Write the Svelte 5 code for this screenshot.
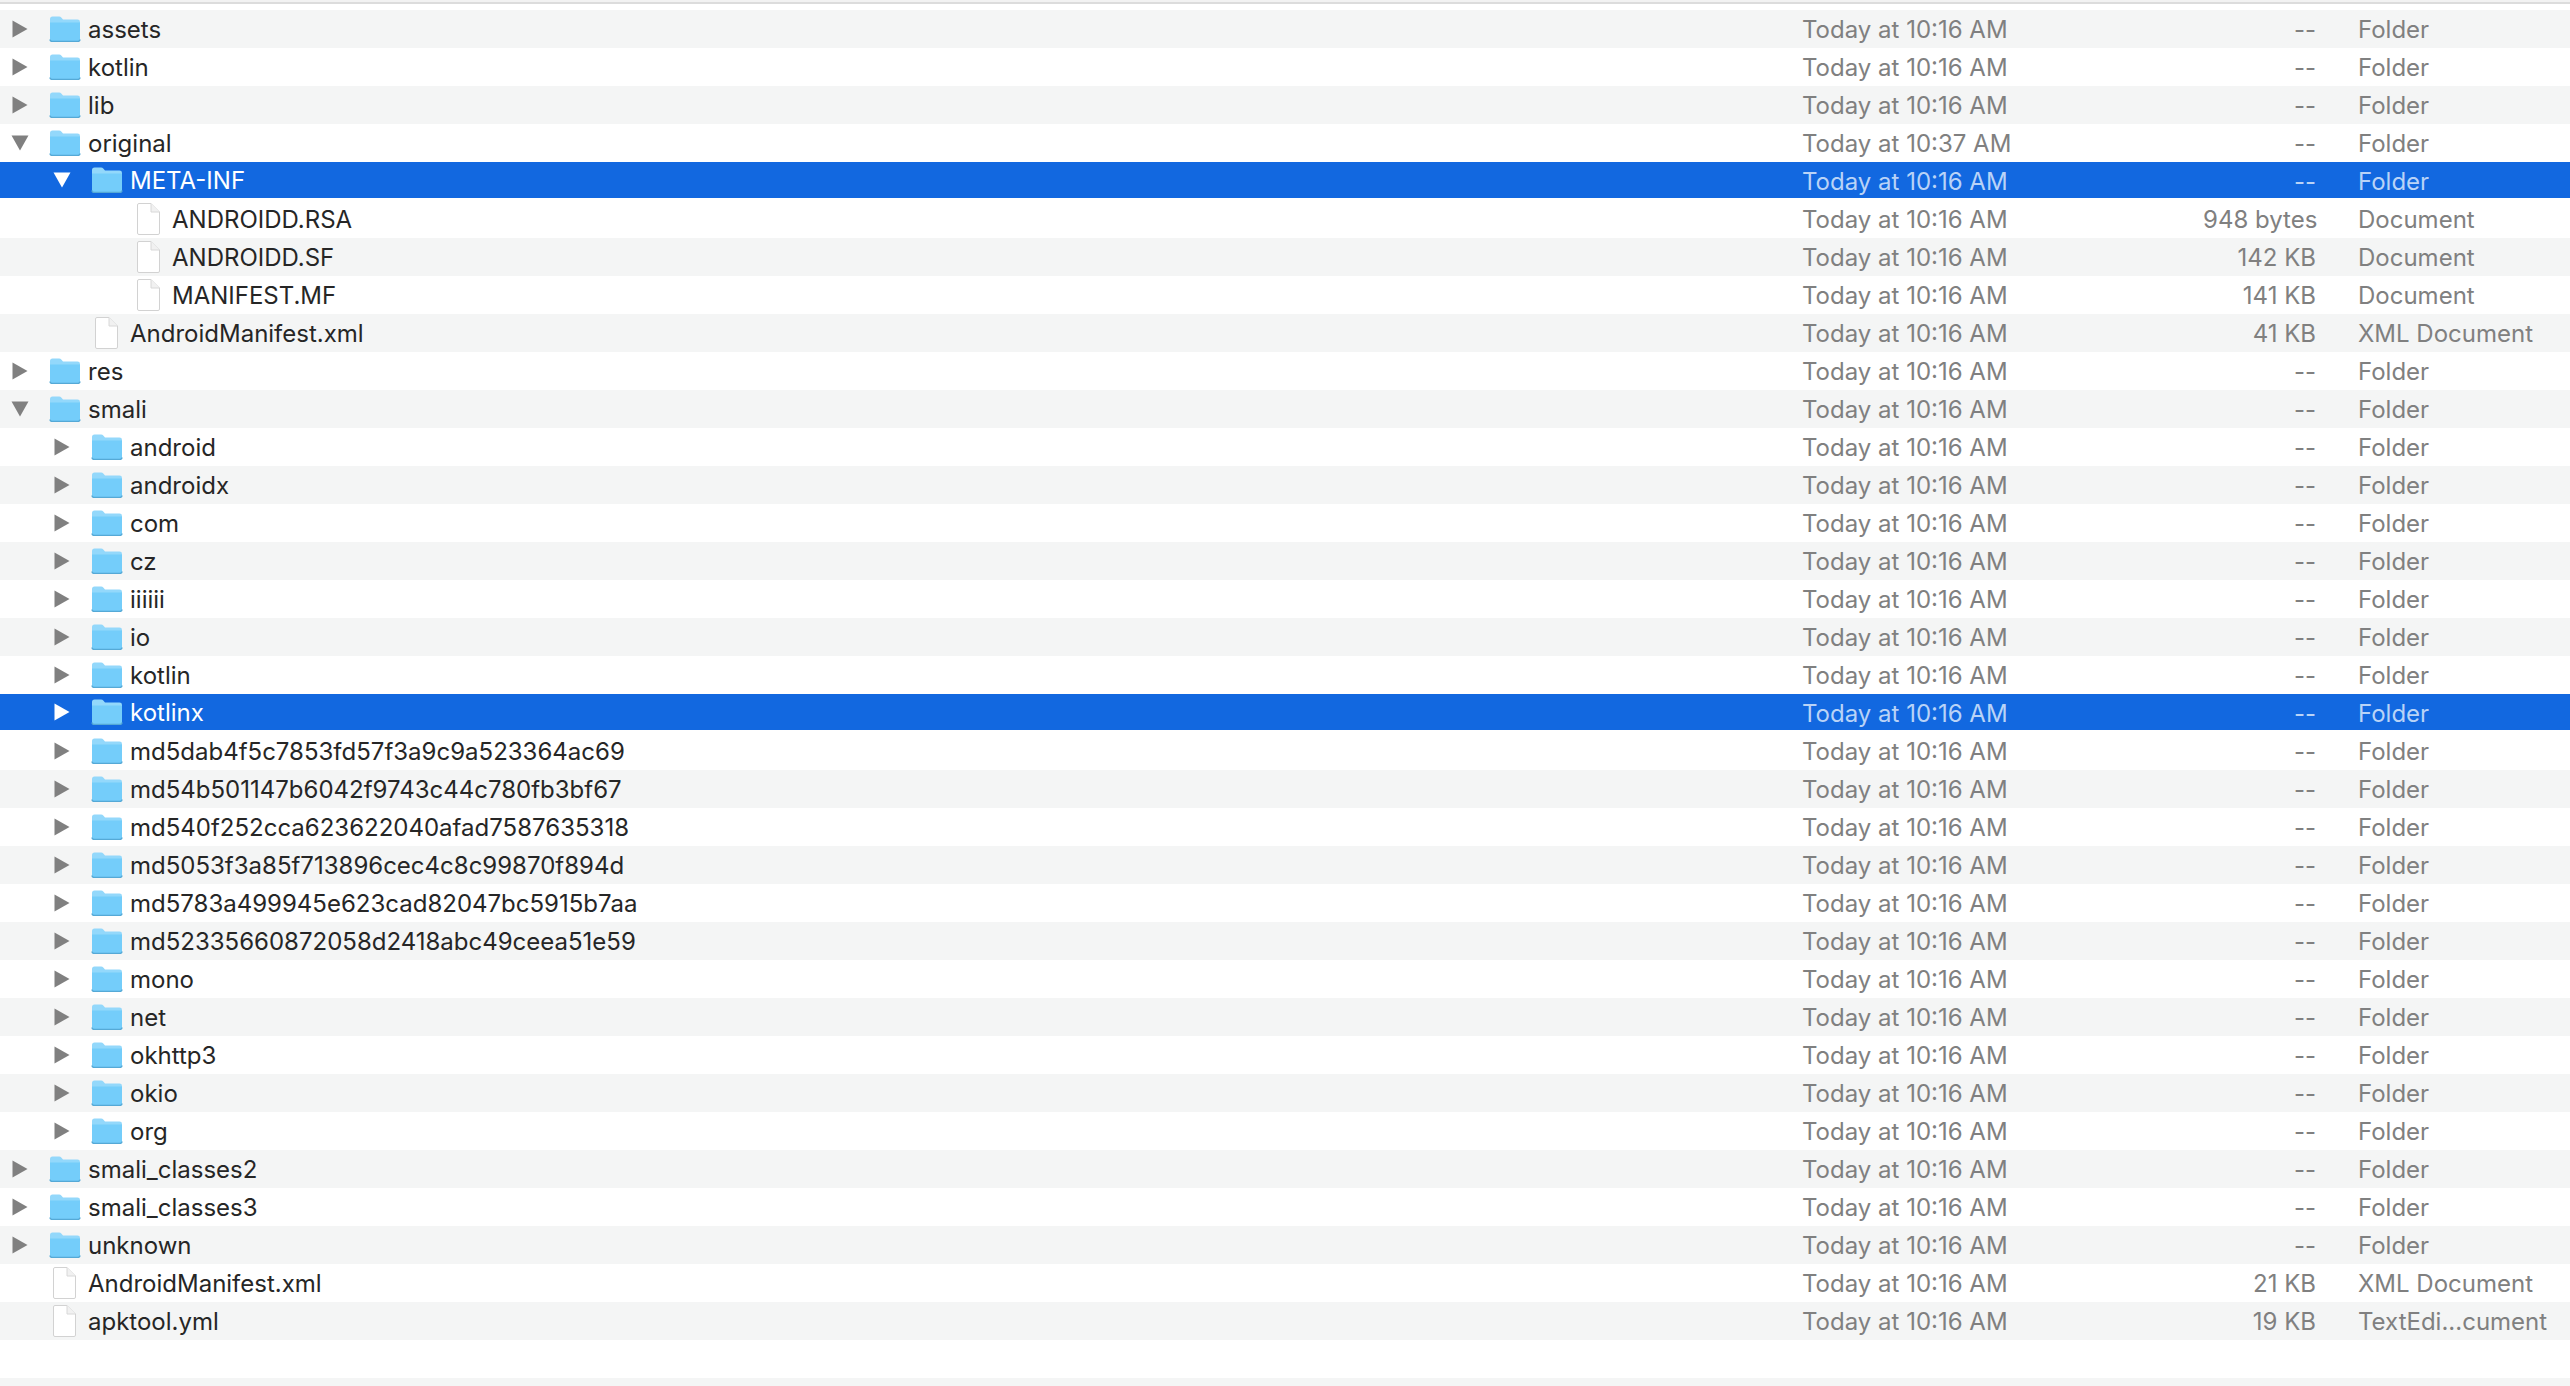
<script>
  const md = [
    ['assets', 0, 'f'], ['kotlin', 0, 'f'], ['lib', 0, 'f'], ['original', 0, 'o', '10:37'],
    ['META-INF', 1, 'o', '10:16', 'sel'],
    ['ANDROIDD.RSA', 2, 'd', '10:16', '', '948 bytes', 'Document'],
    ['ANDROIDD.SF', 2, 'd', '10:16', '', '142 KB', 'Document'],
    ['MANIFEST.MF', 2, 'd', '10:16', '', '141 KB', 'Document'],
    ['AndroidManifest.xml', 1, 'd', '10:16', '', '41 KB', 'XML Document'],
    ['res', 0, 'f'], ['smali', 0, 'o'],
    ['android', 1, 'f'], ['androidx', 1, 'f'], ['com', 1, 'f'], ['cz', 1, 'f'], ['iiiiii', 1, 'f'],
    ['io', 1, 'f'], ['kotlin', 1, 'f'], ['kotlinx', 1, 'f', '10:16', 'sel'],
    ['md5dab4f5c7853fd57f3a9c9a523364ac69', 1, 'f'],
    ['md54b501147b6042f9743c44c780fb3bf67', 1, 'f'],
    ['md540f252cca623622040afad7587635318', 1, 'f'],
    ['md5053f3a85f713896cec4c8c99870f894d', 1, 'f'],
    ['md5783a499945e623cad82047bc5915b7aa', 1, 'f'],
    ['md52335660872058d2418abc49ceea51e59', 1, 'f'],
    ['mono', 1, 'f'], ['net', 1, 'f'], ['okhttp3', 1, 'f'], ['okio', 1, 'f'], ['org', 1, 'f'],
    ['smali_classes2', 0, 'f'], ['smali_classes3', 0, 'f'], ['unknown', 0, 'f'],
    ['AndroidManifest.xml', 0, 'd', '10:16', '', '21 KB', 'XML Document'],
    ['apktool.yml', 0, 'd', '10:16', '', '19 KB', 'TextEdi...cument']
  ];
  const rows = md.map(([name, depth, type, time = '10:16', sel = '', size = '--', kind = 'Folder']) => ({ name, depth, type, time, sel, size, kind }));
</script>

<div class="finder">
  <div class="top-rule"></div>
  <div class="list">
    {#each rows as r, i}
      <div class="row" class:alt={i % 2 === 0} class:sel={r.sel}>
        <div class="name d{r.depth}">
          <span class="arrow">
            {#if r.type === 'f'}
              <svg width="16" height="18" viewBox="0 0 16 18"><path d="M0.5 0.5 L15.5 9 L0.5 17.5 Z" /></svg>
            {:else if r.type === 'o'}
              <svg class="down" width="18" height="16" viewBox="0 0 18 16"><path d="M0.5 0.5 L17.5 0.5 L9 15.5 Z" /></svg>
            {/if}
          </span>
          {#if r.type === 'd'}
            <svg class="ico file" width="24" height="32" viewBox="0 0 24 32">
              <path d="M1.5 2 Q1.5 0.5 3 0.5 L15 0.5 L23.5 9 L23.5 30 Q23.5 31.5 22 31.5 L3 31.5 Q1.5 31.5 1.5 30 Z" fill="#fff" stroke="#d2d2d2" />
              <path d="M15 0.5 L15 9 L23.5 9" fill="#f1f1f1" stroke="#d8d8d8" />
            </svg>
          {:else}
            <svg class="ico" width="32" height="26" viewBox="0 0 32 26">
              <path d="M1 3 Q1 0.5 3.5 0.5 L10 0.5 Q11.5 0.5 12.5 1.8 L14 3.6 L28.5 3.6 Q31 3.6 31 6 L31 8 L1 8 Z" fill="#93d8fb" />
              <path d="M1 6.5 L31 6.5 L31 23 Q31 25.5 28.5 25.5 L3.5 25.5 Q1 25.5 1 23 Z" fill="#74cdfa" />
              <path d="M1 23.5 Q1 25.5 3.5 25.5 L28.5 25.5 Q31 25.5 31 23.5" fill="none" stroke="#55a9d6" stroke-width="1.4" />
            </svg>
          {/if}
          <span class="label">{r.name}</span>
        </div>
        <div class="date">Today at {r.time} AM</div>
        <div class="size">{r.size}</div>
        <div class="kind">{r.kind}</div>
      </div>
    {/each}
    <div class="row"></div>
  </div>
  <div class="bottom-strip"></div>
</div>

<style>
  :global(body) {
    margin: 0;
    background: #fff;
    overflow: hidden;
  }

  .finder {
    width: 2570px;
    height: 1386px;
    display: flex;
    flex-direction: column;
    font-family: Inter, 'Noto Sans', sans-serif;
    font-size: 24px;
    background: #fff;
    overflow: hidden;
  }

  .top-rule {
    height: 4px;
    margin-bottom: 6px;
    flex: none;
    background: #f2f2f2;
    border-bottom: 2px solid #dcdcdc;
    box-sizing: border-box;
  }

  .list {
    flex: 1;
  }

  .row {
    height: 38px;
    display: grid;
    grid-template-columns: 1802px 401px 113px 1fr;
    align-items: start;
    color: #808080;
    white-space: nowrap;
  }

  .alt {
    background: #f4f5f5;
  }

  /* selected rows leave a 2px white gap underneath */
  .sel {
    background: linear-gradient(#1268e0 36px, #fff 36px);
    color: #b9d3f7;
  }

  .name {
    display: flex;
    align-items: center;
    color: #262626;
    height: 38px;
  }

  .d0 { padding-left: 0; }
  .d1 { padding-left: 42px; }
  .d2 { padding-left: 84px; }

  .sel .name {
    color: #fff;
    height: 36px;
  }

  .arrow {
    width: 49px;
    flex: none;
    padding-left: 12px;
    box-sizing: border-box;
    display: flex;
    align-items: center;
  }

  .arrow svg { fill: #808080; }
  .arrow .down { margin-left: -1px; }
  .sel .arrow svg { fill: #fff; }

  .ico { flex: none; margin-right: 7px; }
  .file { margin: 0 12px 0 3px; }

  .date, .size, .kind {
    height: 38px;
    line-height: 39px;
  }

  .size {
    text-align: right;
  }

  .kind {
    padding-left: 42px;
  }

  .bottom-strip {
    height: 8px;
    flex: none;
    background: #f4f5f5;
  }
</style>
